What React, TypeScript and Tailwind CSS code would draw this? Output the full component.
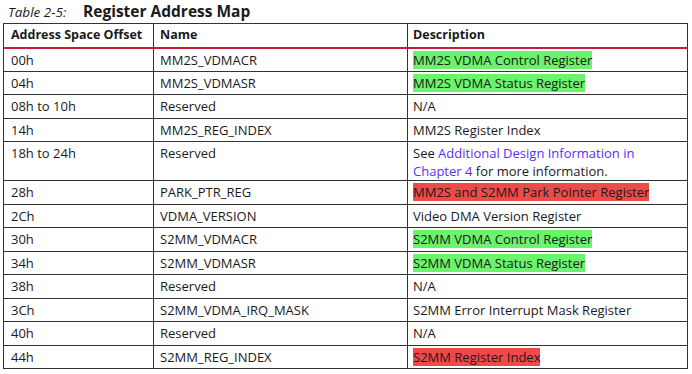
import React from "react";

type Row = {
  offset: string;
  name: string;
  desc: React.ReactNode;
  tall?: boolean;
};

const Green = ({ children }: { children: React.ReactNode }) => (
  <span className="bg-[#6cf26c]">{children}</span>
);

const Red = ({ children }: { children: React.ReactNode }) => (
  <span className="bg-[#ef4a4a]">{children}</span>
);

const rows: Row[] = [
  { offset: "00h", name: "MM2S_VDMACR", desc: <Green>MM2S VDMA Control Register</Green> },
  { offset: "04h", name: "MM2S_VDMASR", desc: <Green>MM2S VDMA Status Register</Green> },
  { offset: "08h to 10h", name: "Reserved", desc: "N/A" },
  { offset: "14h", name: "MM2S_REG_INDEX", desc: "MM2S Register Index" },
  {
    offset: "18h to 24h",
    name: "Reserved",
    tall: true,
    desc: (
      <div className="leading-[18px]">
        <div>
          See <span className="text-[#5b2cff]">Additional Design Information in</span>
        </div>
        <div>
          <span className="text-[#5b2cff]">Chapter 4</span> for more information.
        </div>
      </div>
    ),
  },
  { offset: "28h", name: "PARK_PTR_REG", desc: <Red>MM2S and S2MM Park Pointer Register</Red> },
  { offset: "2Ch", name: "VDMA_VERSION", desc: "Video DMA Version Register" },
  { offset: "30h", name: "S2MM_VDMACR", desc: <Green>S2MM VDMA Control Register</Green> },
  { offset: "34h", name: "S2MM_VDMASR", desc: <Green>S2MM VDMA Status Register</Green> },
  { offset: "38h", name: "Reserved", desc: "N/A" },
  { offset: "3Ch", name: "S2MM_VDMA_IRQ_MASK", desc: "S2MM Error Interrupt Mask Register" },
  { offset: "40h", name: "Reserved", desc: "N/A" },
  { offset: "44h", name: "S2MM_REG_INDEX", desc: <Red>S2MM Register Index</Red> },
];

const App = (): JSX.Element => {
  return (
    <div className="w-[692px] h-[374px] bg-white font-['Open_Sans',sans-serif] text-[#1a1a1a] overflow-hidden">
      <div className="flex items-baseline pl-[8px] pt-[1px] h-[23px]">
        <span className="italic w-[75px] text-[13.5px]">Table 2-5:</span>
        <span className="font-bold text-[15.5px] leading-[20px]">Register Address Map</span>
      </div>
      <table className="ml-[3px] w-[685px] border-collapse text-[13px] leading-[16px]">
        <thead>
          <tr className="h-[24px]">
            <th className="w-[150px] border border-[#333] border-b-[#c41e3a] border-b-2 px-[7px] text-left font-bold text-[12.5px]">
              Address Space Offset
            </th>
            <th className="w-[254px] border border-[#333] border-b-[#c41e3a] border-b-2 px-[6px] text-left font-bold text-[12.5px]">
              Name
            </th>
            <th className="border border-[#333] border-b-[#c41e3a] border-b-2 px-[5px] text-left font-bold text-[12.5px]">
              Description
            </th>
          </tr>
        </thead>
        <tbody>
          {rows.map((r) => (
            <tr key={r.offset} className={r.tall ? "h-[39px]" : "h-[23.5px]"}>
              <td className="border border-[#333] px-[7px] align-top pt-[3px]">{r.offset}</td>
              <td className="border border-[#333] px-[6px] align-top pt-[3px]">{r.name}</td>
              <td className={`border border-[#333] px-[5px] align-top ${r.tall ? "pt-[2px]" : "pt-[3px]"}`}>{r.desc}</td>
            </tr>
          ))}
        </tbody>
      </table>
    </div>
  );
};

export default App;
